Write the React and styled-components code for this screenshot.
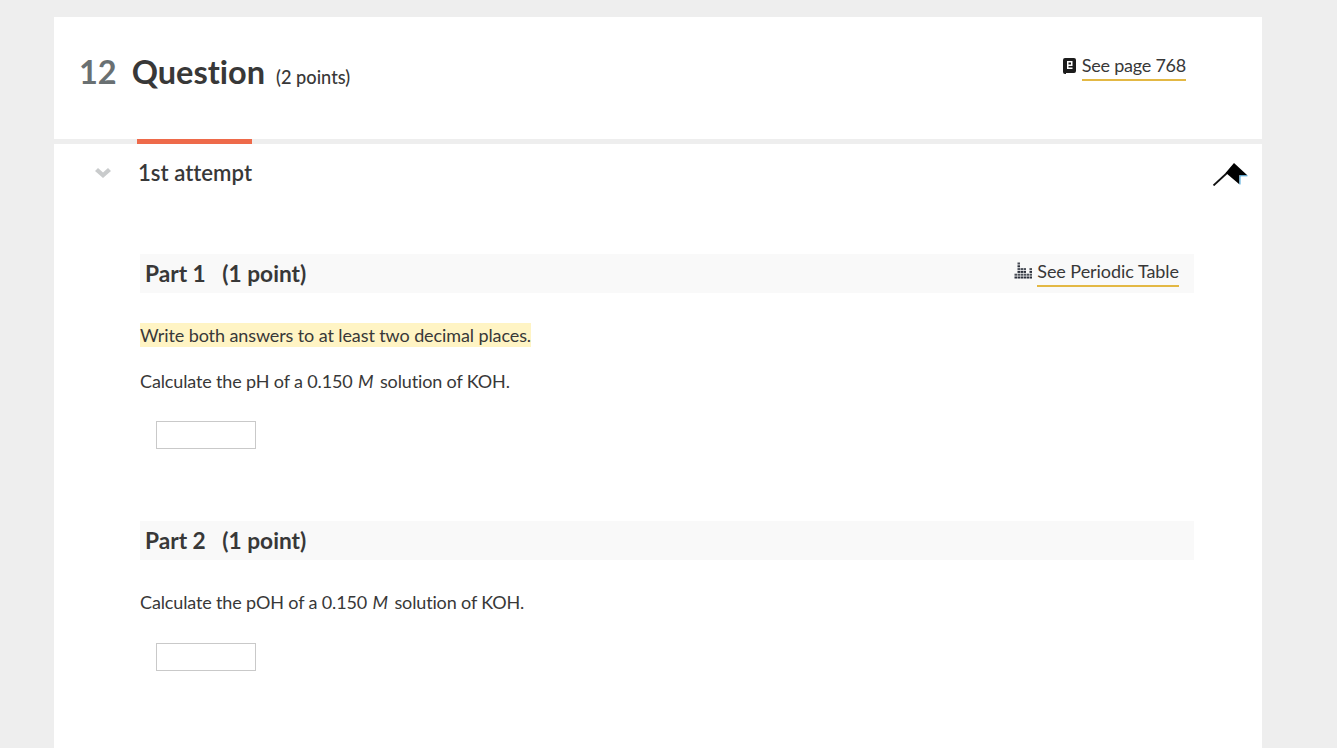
import React from "react";
import styled, { createGlobalStyle } from "styled-components";

const Global = createGlobalStyle`
  html, body { margin: 0; padding: 0; height: 100%; overflow: hidden; background: #eeeeee; }
  body { font-family: Lato, "Open Sans", sans-serif; color: #383838; font-variant-ligatures: none; }
`;

const Page = styled.div`
  padding: 17px 75px 0 54px;
  height: 748px;
  box-sizing: border-box;
`;
const Card = styled.main`
  background: #fff;
  height: 731px;
`;
const Header = styled.header`
  height: 122px;
  display: flex;
  justify-content: space-between;
  align-items: flex-start;
  padding: 0 76px 0 25px;
`;
const Title = styled.h1`
  margin: 34px 0 0;
  display: flex;
  align-items: baseline;
  font-size: 32.500px;
  line-height: 42px;
  font-weight: 700;
  color: #383838;
`;
const Num = styled.span`
  color: #697072;
  margin-right: 15px;
`;
const Points = styled.span`
  font-size: 18.200px;
  font-weight: 500;
  margin-left: 11px;
`;
const RefLink = styled.a`
  display: flex;
  align-items: flex-start;
  gap: ${(p) => p.$gap}px;
  font-size: 18px;
  line-height: 24px;
  letter-spacing: ${(p) => p.$track}px;
  color: #383838;
`;
const RefText = styled.span`
  display: block;
  height: 26px;
  border-bottom: 2px solid #e3b844;
`;
const HeaderLink = styled(RefLink)`
  margin-top: 36px;
`;
const IconSlot = styled.span`
  display: flex;
  padding-top: ${(p) => p.$top}px;
`;
const TabBar = styled.div`
  height: 5px;
  background: #eeeeee;
  padding-left: 83px;
`;
const TabMark = styled.div`
  width: 115px;
  height: 5px;
  background: #ee6a4a;
`;
const Attempt = styled.div`
  display: flex;
  align-items: center;
  height: 58px;
  padding: 0 14px 0 41px;
`;
const Chevron = styled.span`
  display: flex;
  width: 43px;
`;
const AttemptLabel = styled.h2`
  margin: 0;
  flex: 1;
  font-size: 22.200px;
  line-height: 58px;
  font-weight: 600;
  color: #383838;
`;
const Body = styled.div`
  padding: 52px 68px 0 86px;
`;
const PartBar = styled.div`
  display: flex;
  justify-content: space-between;
  align-items: flex-start;
  height: 39px;
  background: #f9f9f9;
  padding: 0 15px 0 5px;
`;
const PartTitle = styled.h3`
  margin: 0;
  font-size: 22.700px;
  line-height: 39px;
  font-weight: 700;
  color: #383838;
  white-space: pre;
`;
const TableLink = styled(RefLink)`
  margin-top: 5px;
`;
const Para = styled.p`
  margin: ${(p) => p.$top}px 0 0;
  font-size: 18px;
  line-height: 24px;
  letter-spacing: -0.140px;
  color: #383838;
`;
const Highlight = styled.span`
  background: #fff4c4;
  padding: 1px 0;
  letter-spacing: -0.100px;
`;
const Answer = styled.input`
  display: block;
  width: 100px;
  height: 28px;
  box-sizing: border-box;
  margin: ${(p) => p.$top}px 0 0 16px;
  border: 1px solid #c9c9c9;
  background: #fff;
  padding: 0;
`;
const Part = styled.section`
  margin-top: ${(p) => p.$top}px;
`;
const Unit = styled.i`
  font-style: italic;
  margin: 0 2px 0 1px;
`;

const BookIcon = () => (
  <svg width="13" height="16" viewBox="0 0 13 16">
    <path d="M2 0h9a2 2 0 0 1 2 2v11a2 2 0 0 1-2 2H3v1H2a2 2 0 0 1-2-2V2a2 2 0 0 1 2-2z" fill="#1c1c1c" />
    <path d="M4 3h5.500v5H5.500v1.500h4V11H4zM5.500 4.500v2h2.500v-2z" fill="#fff" />
  </svg>
);

const TableIcon = () => {
  const heights = [2, 6, 4, 4, 2, 4];
  return (
    <svg width="19" height="18" viewBox="0 0 19 18">
      {heights.map((h, c) =>
        Array.from({ length: h }).map((_, r) => (
          <rect key={`${c}-${r}`} x={c * 3 + 0.5} y={14.5 - r * 2.8} width="2.5" height="2" fill={r % 2 ? "#4a4f58" : "#2b2f3a"} />
        ))
      )}
    </svg>
  );
};

const ChevronIcon = () => (
  <svg width="16" height="10" viewBox="0 0 16 10">
    <path d="M0 3L3 0l5 4.500L13 0l3 3-8 7z" fill="#c9cbcc" />
  </svg>
);

const FlagIcon = () => (
  <svg width="36" height="26" viewBox="0 0 36 26">
    <path d="M1.500 25.500L15 13" stroke="#111" strokeWidth="1.800" fill="none" />
    <path d="M13.700 12.700L22 3 35.300 15.300 27.300 15.300 27.300 24.300z" fill="#000" />
    <path d="M35.500 15.800L28 15.800M28 16V24.500" stroke="#1a8fd0" strokeWidth="0.800" fill="none" />
  </svg>
);

export default function App() {
  return (
    <Page>
      <Global />
      <Card>
        <Header>
          <Title>
            <Num>12</Num>Question<Points>(2 points)</Points>
          </Title>
          <HeaderLink $gap={6} $track={-0.24}>
            <IconSlot $top={5}><BookIcon /></IconSlot>
            <RefText>See page 768</RefText>
          </HeaderLink>
        </Header>
        <TabBar><TabMark /></TabBar>
        <Attempt>
          <Chevron><ChevronIcon /></Chevron>
          <AttemptLabel>1st attempt</AttemptLabel>
          <FlagIcon />
        </Attempt>
        <Body>
          <Part $top={0}>
            <PartBar>
              <PartTitle>{"Part 1   (1 point)"}</PartTitle>
              <TableLink $gap={4} $track={-0.05}>
                <IconSlot $top={3}><TableIcon /></IconSlot>
                <RefText>See Periodic Table</RefText>
              </TableLink>
            </PartBar>
            <Para $top={30}><Highlight>Write both answers to at least two decimal places.</Highlight></Para>
            <Para $top={22}>Calculate the pH of a 0.150 <Unit>M</Unit> solution of KOH.</Para>
            <Answer $top={28} aria-label="pH" />
          </Part>
          <Part $top={72}>
            <PartBar>
              <PartTitle>{"Part 2   (1 point)"}</PartTitle>
            </PartBar>
            <Para $top={30}>Calculate the pOH of a 0.150 <Unit>M</Unit> solution of KOH.</Para>
            <Answer $top={29} aria-label="pOH" />
          </Part>
        </Body>
      </Card>
    </Page>
  );
}
